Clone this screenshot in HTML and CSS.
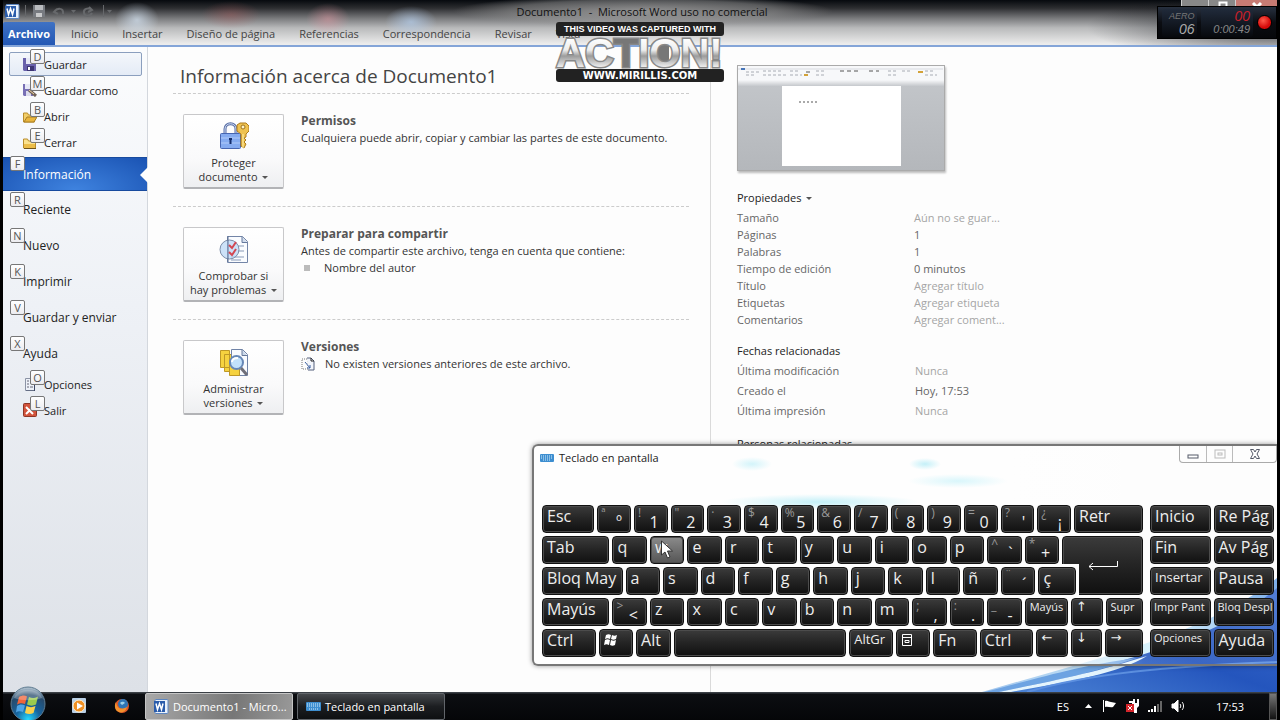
FILE: index.html
```html
<!DOCTYPE html>
<html lang="es">
<head>
    <meta charset="UTF-8">
    <meta name="viewport" content="width=device-width, initial-scale=1.0">
    <title>Documento1 - Microsoft Word uso no comercial</title>
    <link rel="stylesheet" href="styles.css">
</head>
<body>
    <div class="word">
        <header class="header">
            <div class="titlebar">
                <svg class="word-icon" width="15" height="15" viewBox="0 0 15 15"><rect x="1" y="0.5" width="13" height="14" rx="1" fill="#e9f1fb" stroke="#5d86c0"/><rect x="0" y="2" width="11" height="11" fill="#2a5cab"/><path d="M2 4.500l1.500 6 2-6 2 6 1.500-6" fill="none" stroke="#fff" stroke-width="1.500"/></svg>
                <svg width="90" height="14" viewBox="0 0 90 14" fill="none" stroke="#66686b"><path d="M2.500 1v12M80.500 1v12"/><rect x="10" y="1" width="12" height="12" fill="#777a80" stroke="none"/><rect x="12" y="1" width="8" height="5" fill="#b9bbbf" stroke="none"/><rect x="13" y="9" width="6" height="4" fill="#c8c9cb" stroke="none"/><path d="M34 5l-3 3 4 2M31 8c3-4 10-5 9 2M66 3l3 3-4 2M69 6c-4-3-9-1-8 3s6 4 8 0" stroke-width="2"/><path d="M48 6h5l-2.500 3zM84 6h5l-2.500 3z" fill="#66686b" stroke="none"/></svg>
                <span class="window-title">Documento1&nbsp; -&nbsp; Microsoft Word uso no comercial</span>
                <div class="caption">
                    <button aria-label="Minimizar"></button>
                    <button aria-label="Restaurar"><svg width="12" height="6"><path d="M3.500 6V2.500h7V6" fill="none" stroke="#fff" stroke-width="2"/></svg></button>
                    <button class="caption-close" aria-label="Cerrar"><svg width="12" height="6"><path d="M2 3l4 4 4-4" fill="none" stroke="#fff" stroke-width="3"/></svg></button>
                </div>
            </div>
            <nav class="tabs">
                <button class="tab active">Archivo</button>
                <button class="tab">Inicio</button>
                <button class="tab">Insertar</button>
                <button class="tab">Diseño de página</button>
                <button class="tab">Referencias</button>
                <button class="tab">Correspondencia</button>
                <button class="tab">Revisar</button>
                <button class="tab">Vista</button>
            </nav>
        </header>

        <div class="backstage">
            <nav class="sidebar">
                <button class="item small focused">
                    <svg width="14" height="14" viewBox="0 0 14 14"><path d="M0 1h13v13H1l-1-1z" fill="#6961ab"/><rect x="3" y="1" width="8" height="6" fill="#e6e8f6"/><rect x="4" y="9" width="7" height="5" fill="#3c3573"/><rect x="5" y="10" width="2" height="3" fill="#fff"/></svg>
                    <kbd>D</kbd><span>Guardar</span>
                </button>
                <button class="item small">
                    <svg width="14" height="14" viewBox="0 0 14 14"><path d="M0 1h10v12H1l-1-1z" fill="#7870b5"/><rect x="2" y="1" width="6" height="5" fill="#e6e8f6"/><rect x="3" y="8" width="5" height="5" fill="#dcdcec"/><path d="M6 7l7 6" stroke="#6f6257" stroke-width="3"/><path d="M6 7l5 4" stroke="#f0d3a3"/></svg>
                    <kbd>M</kbd><span>Guardar como</span>
                </button>
                <button class="item small">
                    <svg width="14" height="14" viewBox="0 0 14 14"><path d="M.5 13V4h4l1 2h6v7z" fill="#f3cf69" stroke="#b98d2c"/><path d="M1 13l3-5h10l-3 5z" fill="#e9b53d" stroke="#a97e25"/></svg>
                    <kbd>B</kbd><span>Abrir</span>
                </button>
                <button class="item small">
                    <svg width="14" height="14" viewBox="0 0 14 14"><path d="M.5 13V4h4l1 2h7v7z" fill="#fbe18c" stroke="#b98d2c"/><path d="M1 9h11v4H1z" fill="#ecbd49"/><path d="M1 13.500h12" stroke="#705419"/></svg>
                    <kbd>E</kbd><span>Cerrar</span>
                </button>
                <button class="item selected"><kbd>F</kbd><span>Información</span></button>
                <button class="item"><kbd>R</kbd><span>Reciente</span></button>
                <button class="item"><kbd>N</kbd><span>Nuevo</span></button>
                <button class="item"><kbd>K</kbd><span>Imprimir</span></button>
                <button class="item"><kbd>V</kbd><span>Guardar y enviar</span></button>
                <button class="item"><kbd>X</kbd><span>Ayuda</span></button>
                <button class="item small">
                    <svg width="14" height="14" viewBox="0 0 14 14"><path d="M2.500 1.500h9v12h-9z" fill="#edf1f8" stroke="#8b93a5"/><path d="M4 4h2M4 7h2M4 10h2M7 10h3" stroke="#667" stroke-width="1"/><path d="M11.500 4v10H3" fill="none" stroke="#3f4965"/></svg>
                    <kbd>O</kbd><span>Opciones</span>
                </button>
                <button class="item small">
                    <svg width="14" height="14" viewBox="0 0 14 14"><rect x=".5" y=".5" width="13" height="13" rx="1" fill="#d2543c" stroke="#8d3526"/><path d="M3 4l7 7M10 4l-7 7" stroke="#fff" stroke-width="2"/></svg>
                    <kbd>L</kbd><span>Salir</span>
                </button>
            </nav>

            <main class="info">
                <h1>Información acerca de Documento1</h1>
                <section class="block">
                    <button class="big-button">
                        <svg width="30" height="30" viewBox="0 0 30 30"><path d="M6 12V7c0-7 11-7 11 0v5" fill="none" stroke="#5a6fa5" stroke-width="3"/><path d="M6 12V7c0-7 11-7 11 0v5" fill="none" stroke="#cfdcf5"/><rect x="1.500" y="11.500" width="20" height="15" rx="1" fill="#85abf0" stroke="#4766b1"/><path d="M2 16h19M2 21h19" stroke="#b1cbf9"/><path d="M11.500 16v6M10 17h3" stroke="#132c6a" stroke-width="2"/><path d="M18 3l3-2h6l3 3v5l-3 3v3l-2 1 2 2-2 2 2 2-2 4-3-2V12l-4-3z" fill="#efc250" stroke="#ad7b1c"/><circle cx="24" cy="5" r="2" fill="#fff4c9" stroke="#9c721e"/><path d="M24 12v14" stroke="#fff0a7"/></svg>
                        <span>Proteger<br>documento <i class="caret"></i></span>
                    </button>
                    <div class="block-text">
                        <h2>Permisos</h2>
                        <p>Cualquiera puede abrir, copiar y cambiar las partes de este documento.</p>
                    </div>
                </section>
                <section class="block">
                    <button class="big-button">
                        <svg width="30" height="30" viewBox="0 0 30 30"><path d="M8.500 1.500h15l5 5v21h-20z" fill="#fafcff" stroke="#7385a7"/><path d="M23 1.500v6h5.500" fill="#d1dced" stroke="#667a9e"/><path d="M19 11h6M19 16h6M12 22h13M12 25h10" stroke="#8799b7"/><circle cx="10.500" cy="14.500" r="9.500" fill="#b8d6f5" fill-opacity=".7" stroke="#7d8ea9"/><path d="M9 1v26" stroke="#596b8f"/><path d="M10 10l3 3 4-6M10 17l3 3 4-6" fill="none" stroke="#d34752" stroke-width="2"/></svg>
                        <span>Comprobar si<br>hay problemas <i class="caret"></i></span>
                    </button>
                    <div class="block-text">
                        <h2>Preparar para compartir</h2>
                        <p>Antes de compartir este archivo, tenga en cuenta que contiene:</p>
                        <ul>
                            <li>Nombre del autor</li>
                        </ul>
                    </div>
                </section>
                <section class="block">
                    <button class="big-button">
                        <svg width="30" height="30" viewBox="0 0 30 30"><path d="M1.500 2.500h9v17h-9zM5.500 6.500h9v17h-9z" fill="#f6d23f" stroke="#be9827"/><path d="M12.500 1.500h11l5 5v21h-16z" fill="#f9fbff" stroke="#7083a7"/><path d="M23 1.500v6h5" fill="#cbd8ea" stroke="#66789a"/><path d="M10.500 11.500h10v16h-10z" fill="#f6d23f" stroke="#be9827"/><circle cx="17.500" cy="14.500" r="6.500" fill="#c2e1fb" stroke="#6687b7" stroke-width="2"/><path d="M13 14c0-4 4-4 6-4" fill="none" stroke="#fff" stroke-width="2"/><path d="M22 20l6 7" stroke="#6f6f79" stroke-width="3"/></svg>
                        <span>Administrar<br>versiones <i class="caret"></i></span>
                    </button>
                    <div class="block-text">
                        <h2>Versiones</h2>
                        <p class="with-icon">
                            <svg width="14" height="14" viewBox="0 0 14 14" fill="none"><path d="M1 2h6v10H1z" stroke="#777" stroke-dasharray="1 1"/><path d="M6 1h4l3 3v9H7" fill="#f2f5fb" stroke="#55607c"/><path d="M10 1v3h3" stroke="#222"/><path d="M4 5l5 6M9 8v3H6" stroke="#3b5f9f"/></svg>
                            No existen versiones anteriores de este archivo.
                        </p>
                    </div>
                </section>
            </main>

            <aside class="properties">
                <svg class="swoosh" width="300" height="118" viewBox="0 0 300 118" preserveAspectRatio="none">
                    <defs>
                        <linearGradient id="blue" x1="0" y1="1" x2="1" y2="0"><stop offset="0" stop-color="#4e86d6"/><stop offset=".5" stop-color="#2455bd"/><stop offset="1" stop-color="#3f6fd0"/></linearGradient>
                        <linearGradient id="cyan" x1="0" x2="1"><stop offset="0" stop-color="#9fc4ec"/><stop offset=".6" stop-color="#d8f3fc"/><stop offset="1" stop-color="#6fa5e6"/></linearGradient>
                    </defs>
                    <path d="M5 118C120 84 230 60 300 4v114z" fill="url(#cyan)"/>
                    <path d="M20 118C120 92 230 74 300 14v104z" fill="url(#blue)"/>
                    <path d="M8 118C70 102 100 92 160 84 120 98 80 106 22 118z" fill="#6da3e2"/>
                    <path d="M22 118C80 106 120 98 170 82 140 100 90 108 34 118z" fill="#e4f4fd"/>
                    <path d="M50 118c60-18 140-26 250-30" fill="none" stroke="#5c8fdf" stroke-width="2"/>
                </svg>
                <div class="thumb">
                    <div class="thumb-ribbon">
                        <svg width="205" height="14" viewBox="0 0 205 14" fill="none" stroke="#a8acb4"><path d="M0 3h205" stroke="#d7dae0"/><path d="M3 3h4" stroke="#4775b8" stroke-width="2"/><path d="M8 6h14M8 9h10M25 5h20M25 9h24M52 5h10M52 9h12M78 5h10M78 9h9M150 5h8M150 9h10M164 5h10M187 5h10M187 9h12" stroke-dasharray="3 2"/><path d="M68 6h4M102 5h20M131 5h10" stroke="#555" stroke-dasharray="4 3"/><path d="M66 9h4M180 6h5" stroke="#d3a238" stroke-width="2"/></svg>
                    </div>
                    <div class="thumb-page"></div>
                </div>
                <button class="props-title">Propiedades <i class="caret"></i></button>
                <table>
                    <tr><th>Tamaño</th><td class="empty">Aún no se guar...</td></tr>
                    <tr><th>Páginas</th><td>1</td></tr>
                    <tr><th>Palabras</th><td>1</td></tr>
                    <tr><th>Tiempo de edición</th><td>0 minutos</td></tr>
                    <tr><th>Título</th><td class="empty">Agregar título</td></tr>
                    <tr><th>Etiquetas</th><td class="empty">Agregar etiqueta</td></tr>
                    <tr><th>Comentarios</th><td class="empty">Agregar coment...</td></tr>
                </table>
                <h3>Fechas relacionadas</h3>
                <table class="dates">
                    <tr><th>Última modificación</th><td class="empty">Nunca</td></tr>
                    <tr><th>Creado el</th><td>Hoy, 17:53</td></tr>
                    <tr><th>Última impresión</th><td class="empty">Nunca</td></tr>
                </table>
                <h3>Personas relacionadas</h3>
            </aside>
        </div>
    </div>

    <div class="keyboard">
        <div class="kb-title">
            <svg width="14" height="8" viewBox="0 0 14 8"><rect width="14" height="8" rx="1" fill="#3d8ed0"/><path d="M1 2h12M1 4h12M3 6h8" stroke="#d8eefc" stroke-dasharray="1 1"/></svg>
            <span>Teclado en pantalla</span>
            <div class="kb-caption">
                <button aria-label="Minimizar"><svg width="12" height="12"><rect x="1" y="7" width="10" height="3" fill="#fff" stroke="#555a68"/></svg></button>
                <button aria-label="Maximizar"><svg width="12" height="12" fill="none" stroke="#bbb"><rect x="1" y="2" width="10" height="8"/><rect x="4" y="5" width="4" height="2"/></svg></button>
                <button class="wide" aria-label="Cerrar"><svg width="12" height="12"><path d="M1.500 1.500h3L6 4l1.500-2.500h3L8 6l2.500 4.500h-3L6 8l-1.500 2.500h-3L4 6z" fill="#fff" stroke="#555a68"/></svg></button>
            </div>
        </div>
        <div class="keys">
            <div class="keys-main">
                <div class="row">
                    <button class="key w53">Esc</button>
                    <button class="key dual"><sup>ª</sup><b>º</b></button>
                    <button class="key dual"><sup>!</sup><b>1</b></button>
                    <button class="key dual"><sup>"</sup><b>2</b></button>
                    <button class="key dual"><sup>·</sup><b>3</b></button>
                    <button class="key dual"><sup>$</sup><b>4</b></button>
                    <button class="key dual"><sup>%</sup><b>5</b></button>
                    <button class="key dual"><sup>&amp;</sup><b>6</b></button>
                    <button class="key dual"><sup>/</sup><b>7</b></button>
                    <button class="key dual"><sup>(</sup><b>8</b></button>
                    <button class="key dual"><sup>)</sup><b>9</b></button>
                    <button class="key dual"><sup>=</sup><b>0</b></button>
                    <button class="key dual"><sup>?</sup><b>'</b></button>
                    <button class="key dual"><sup>¿</sup><b>¡</b></button>
                    <button class="key w70">Retr</button>
                </div>
                <div class="enter-rows">
                    <div class="row row-upper">
                        <button class="key w67">Tab</button>
                        <button class="key">q</button>
                        <button class="key hover">w
                            <svg class="cursor" width="12" height="19" viewBox="0 0 12 19"><path d="M.5 1v14l3.500-3 2.500 6 2.500-1-2.500-6h5z" fill="#fff" stroke="#333"/></svg>
                        </button>
                        <button class="key">e</button>
                        <button class="key">r</button>
                        <button class="key">t</button>
                        <button class="key">y</button>
                        <button class="key">u</button>
                        <button class="key">i</button>
                        <button class="key">o</button>
                        <button class="key">p</button>
                        <button class="key dual"><sup>^</sup><b>`</b></button>
                        <button class="key dual"><sup>*</sup><b>+</b></button>
                    </div>
                    <button class="key enter" aria-label="Intro"><svg width="32" height="10" viewBox="0 0 32 10"><path d="M30.500 0v5.500H2M6 2L2 5.500 6 9" fill="none" stroke="#fff"/></svg></button>
                    <div class="row row-lower">
                        <button class="key w80">Bloq May</button>
                        <button class="key">a</button>
                        <button class="key">s</button>
                        <button class="key">d</button>
                        <button class="key">f</button>
                        <button class="key">g</button>
                        <button class="key">h</button>
                        <button class="key">j</button>
                        <button class="key">k</button>
                        <button class="key">l</button>
                        <button class="key">ñ</button>
                        <button class="key dual"><sup>¨</sup><b>´</b></button>
                        <button class="key w37">ç</button>
                    </div>
                </div>
                <div class="row">
                    <button class="key w67">Mayús</button>
                    <button class="key dual"><sup>&gt;</sup><b>&lt;</b></button>
                    <button class="key">z</button>
                    <button class="key">x</button>
                    <button class="key">c</button>
                    <button class="key">v</button>
                    <button class="key">b</button>
                    <button class="key">n</button>
                    <button class="key">m</button>
                    <button class="key dual"><sup>;</sup><b>,</b></button>
                    <button class="key dual"><sup>:</sup><b>.</b></button>
                    <button class="key dual"><sup>_</sup><b>-</b></button>
                    <button class="key w43 tiny">Mayús</button>
                    <button class="key w31 arrow">↑</button>
                    <button class="key w37 tiny">Supr</button>
                </div>
                <div class="row">
                    <button class="key w53">Ctrl</button>
                    <button class="key" aria-label="Windows"><svg width="14" height="14" viewBox="0 0 14 14" fill="#fff"><path d="M2 2c2-1 3-1 5 0L6 6C4 5 3 5 1 6zM8 2c2 1 3 1 5 0l-1 4c-2 1-3 1-5 0zM1 7c2-1 3-1 5 0l-1 5c-2-1-3-1-5 0zM7 7c2 1 3 1 5 0l-1 5c-2 1-3 1-5 0z"/></svg></button>
                    <button class="key">Alt</button>
                    <button class="key w172" aria-label="Espacio"></button>
                    <button class="key w43 mid">AltGr</button>
                    <button class="key" aria-label="Menú"><svg width="12" height="14" fill="none" stroke="#fff"><path d="M1.500 1.500h9v11h-9zM1 4.500h10M4 7.500h4v2H4z"/></svg></button>
                    <button class="key w43">Fn</button>
                    <button class="key w53">Ctrl</button>
                    <button class="key w31 arrow">←</button>
                    <button class="key w31 arrow">↓</button>
                    <button class="key w37 arrow">→</button>
                </div>
            </div>
            <div class="keys-nav">
                <button class="key">Inicio</button>
                <button class="key">Re Pág</button>
                <button class="key">Fin</button>
                <button class="key">Av Pág</button>
                <button class="key mid">Insertar</button>
                <button class="key">Pausa</button>
                <button class="key tiny">Impr Pant</button>
                <button class="key tiny">Bloq Despl</button>
                <button class="key tiny">Opciones</button>
                <button class="key">Ayuda</button>
            </div>
        </div>
    </div>

    <footer class="taskbar">
        <button class="start" aria-label="Inicio">
            <svg width="36" height="36" viewBox="0 0 36 36"><defs><radialGradient id="orb" cx=".5" cy=".95" r=".9"><stop offset="0" stop-color="#25d9ff"/><stop offset=".4" stop-color="#17649f"/><stop offset=".8" stop-color="#274a6b"/><stop offset="1" stop-color="#a6b9c8"/></radialGradient></defs><circle cx="18" cy="18" r="17" fill="url(#orb)" stroke="#5f7c91"/><path d="M9 11c3-2 6-2 8-.5L15 18c-3-1-5-1-8 .5z" fill="#f0653a"/><path d="M19 11c3 1.500 5 1.500 9-.5l-2 8c-3 1.500-6 1.500-9 0z" fill="#9ccb4d"/><path d="M7 20c3-2 5-2 8-.5L13 26c-3-1-5-1-7 .5z" fill="#4ea4e6"/><path d="M16.500 20c3 1.500 6 1.500 9 0l-2 7c-3 1.500-6 1-8.500 0z" fill="#fbd14c"/><path d="M4 12C8 1 28 1 32 12c-8 3-20 3-28 0z" fill="#fff" opacity=".25"/></svg>
        </button>
        <button class="launcher" aria-label="Reproductor"><svg width="16" height="16" viewBox="0 0 16 16"><rect x="1" y="0" width="14" height="15" rx="1" fill="#b8cfe6"/><circle cx="8" cy="8" r="6" fill="#f09125" stroke="#fff1d2"/><path d="M6 4.500v7l6-3.500z" fill="#fff"/></svg></button>
        <button class="launcher" aria-label="Firefox"><svg width="16" height="16" viewBox="0 0 16 16"><circle cx="8" cy="8" r="7" fill="#de5728"/><circle cx="9" cy="6" r="5" fill="#2f75b5"/><path d="M2 4c1 7 5 8 11 5-1 5-6 7-10 4-2-2-3-6-1-9z" fill="#f2912d"/><path d="M6 5c2-2 4-1 5 0l-3 2z" fill="#9fd3ea"/></svg></button>
        <button class="task current">
            <svg width="15" height="15" viewBox="0 0 15 15"><rect x="1" y=".5" width="13" height="14" rx="1" fill="#e9f1fb" stroke="#5d86c0"/><rect y="2" width="11" height="11" fill="#2a5cab"/><path d="M2 4.500l1.500 6 2-6 2 6 1.500-6" fill="none" stroke="#fff" stroke-width="1.500"/></svg>
            Documento1 - Micro...
        </button>
        <button class="task">
            <svg width="15" height="9" viewBox="0 0 15 9"><rect width="15" height="9" rx="1" fill="#3d8ed0"/><path d="M1 2h13M1 4h13M3 7h9" stroke="#d8eefc" stroke-dasharray="1 1"/></svg>
            Teclado en pantalla
        </button>
        <div class="tray">
            <span class="lang">ES</span>
            <svg width="9" height="5"><path d="M1 4l3.500-4L8 4z" fill="#fff"/></svg>
            <svg width="15" height="14" viewBox="0 0 15 14"><path d="M1.500 1v12" stroke="#fff"/><path d="M3 2c3-1 4 1 6 1l5 1-3 4c-3 1-5-1-8 0z" fill="#fff"/></svg>
            <svg width="13" height="14" viewBox="0 0 13 14"><path d="M3 3h4M8 0v4M12 0v4" stroke="#fff" stroke-width="2"/><path d="M6 4h7v3l-2 2v5H8V9L6 7z" fill="#fff"/><rect y="5" width="8" height="8" fill="#d4252b"/><path d="M2 7l4 4M6 7l-4 4" stroke="#fff"/></svg>
            <svg width="14" height="12" viewBox="0 0 14 12"><path d="M1 12v-2M4 12V9M7 12V6" stroke="#fff" stroke-width="2"/><path d="M10 12V4M13 12V1" stroke="#666" stroke-width="2"/></svg>
            <svg width="14" height="14" viewBox="0 0 14 14" fill="none" stroke="#fff"><path d="M1 5h2l4-4v12L3 9H1z" fill="#fff"/><path d="M9 5c1 1 1 3 0 4M11 3c2 2 2 6 0 8"/></svg>
            <time>17:53</time>
        </div>
        <button class="show-desktop" aria-label="Mostrar escritorio"></button>
    </footer>

    <div class="watermark">
        <p class="wm-top">THIS VIDEO WAS CAPTURED WITH</p>
        <svg width="172" height="33" viewBox="0 0 172 33">
            <defs><linearGradient id="steel" gradientUnits="userSpaceOnUse" x1="0" y1="2" x2="0" y2="32"><stop offset="0" stop-color="#fff"/><stop offset=".4" stop-color="#eee"/><stop offset=".6" stop-color="#9c9c9c"/><stop offset="1" stop-color="#f6f6f6"/></linearGradient></defs>
            <rect x="97" y="7" width="18" height="19" rx="3" fill="#777"/>
            <text class="wm-logo" x="2" y="31">AC<tspan class="wm-dark">T</tspan>ION!</text>
        </svg>
        <p class="wm-bottom">WWW.MIRILLIS.COM</p>
    </div>

    <div class="recorder">
        <div class="rec-panel"><span class="dim">AERO</span><span class="num">06</span></div>
        <div class="rec-panel"><span class="num red">00</span><span class="dim clock">0:00:49</span></div>
        <div class="rec-dot"></div>
    </div>
</body>
</html>
```
FILE: styles.css
```css
* {
    box-sizing: border-box;
}
body {
    margin: 0;
    padding: 0 3px;
    height: 100vh;
    display: flex;
    flex-direction: column;
    position: relative;
    overflow: hidden;
    background: #000;
    font-family: "Open Sans", "Noto Sans", sans-serif;
    font-size: 11px;
    color: #333;
}
button {
    font: inherit;
    color: inherit;
    background: none;
    border: none;
    margin: 0;
    padding: 0;
    text-align: left;
}
h1, h2, h3, p, ul {
    margin: 0;
    padding: 0;
    font-weight: normal;
}
svg {
    flex: none;
}

/* Word window */
.word {
    flex: 1;
    min-height: 0;
    display: flex;
    flex-direction: column;
    background: #fdfdfd;
}
.header {
    border-bottom: 2px solid #84a5d8;
    background:
        radial-gradient(ellipse 22px 18px at 134px 20px, rgba(215, 230, 245, 0.7), transparent),
        radial-gradient(ellipse 30px 14px at 228px 15px, rgba(170, 90, 90, 0.4), transparent),
        radial-gradient(ellipse 22px 16px at 325px 19px, rgba(225, 150, 160, 0.5), transparent),
        radial-gradient(ellipse 26px 16px at 408px 22px, rgba(180, 205, 235, 0.7), transparent),
        radial-gradient(ellipse 190px 16px at 640px 11px, rgba(160, 160, 160, 0.85), rgba(150, 150, 150, 0.5) 70%, transparent),
        radial-gradient(ellipse 190px 34px at 100% 60%, rgba(10, 12, 18, 0.7), transparent),
        linear-gradient(#06090e 0, #2c2d30 8px, #77787a 18px, #b9babb 28px, #ececec 44px);
}
.titlebar {
    height: 22px;
    display: flex;
    align-items: center;
    gap: 3px;
    padding-left: 2px;
}
.window-title {
    flex: 1;
    padding-right: 10px;
    text-align: center;
    color: #111;
}
.caption {
    align-self: flex-start;
    display: flex;
    height: 7px;
    background: #888;
}
.caption button {
    width: 27px;
    height: 7px;
    display: flex;
    justify-content: center;
    border-left: 1px solid #ccc;
}
.caption .caption-close {
    width: 42px;
    background: #c77b74;
}
.tabs {
    height: 23px;
    display: flex;
    gap: 24px;
}
.tab {
    color: #444;
}
.tab.active {
    width: 52px;
    margin-right: -8px;
    text-align: center;
    color: #fff;
    font-weight: bold;
    background: linear-gradient(#3f72c4, #2257b4);
    border-radius: 2px 2px 0 0;
}
.backstage {
    flex: 1;
    min-height: 0;
    display: flex;
}

/* Left menu */
.sidebar {
    width: 145px;
    padding-top: 4px;
    display: flex;
    flex-direction: column;
    background: linear-gradient(#fbfcfd, #eef1f6 40%, #dde1e7);
    border-right: 1px solid #d3d7dd;
}
.item {
    position: relative;
    height: 36px;
    flex: none;
    display: flex;
    align-items: center;
    padding-left: 20px;
    font-size: 12px;
    color: #222;
}
.item.small {
    height: 26px;
    font-size: 11px;
    gap: 7px;
}
.item.focused {
    height: 24px;
    margin: 1px 5px 1px 6px;
    padding-left: 13px;
    border: 1px solid #8b9fbe;
    border-radius: 2px;
    background: linear-gradient(#f4f7fb, #e4ebf6);
}
.item.selected {
    height: 34px;
    margin: 2px 0 0;
    color: #fff;
    background: radial-gradient(ellipse at 50% 100%, #3f83df, #1a53b3);
    border-top: 1px solid #174a9e;
    border-bottom: 1px solid #174a9e;
}
.item.selected::after {
    content: "";
    position: absolute;
    right: -1px;
    top: 9px;
    border: 8px solid transparent;
    border-left: 0;
    border-right-color: #fdfdfd;
}
kbd {
    position: absolute;
    left: 7px;
    top: 1px;
    width: 15px;
    height: 15px;
    border: 1px solid #777;
    border-radius: 2px;
    background: linear-gradient(#fff, #ececf0);
    font-family: inherit;
    font-size: 11px;
    line-height: 13px;
    text-align: center;
    color: #555;
}
.item.selected kbd {
    top: -2px;
}
.small kbd {
    left: 27px;
    top: -1px;
}
.focused kbd {
    left: 20px;
    top: -4px;
}

/* Middle column */
.info {
    width: 563px;
    padding: 15px 21px 0 25px;
    border-right: 1px solid #dadada;
}
h1 {
    padding: 0 7px 2px;
    font-size: 19px;
    line-height: 29px;
    color: #444;
}
.block {
    display: flex;
    gap: 17px;
    padding: 20px 10px 17px;
    border-top: 1px dashed #ccc;
}
.big-button {
    width: 101px;
    height: 75px;
    flex: none;
    display: flex;
    flex-direction: column;
    align-items: center;
    justify-content: flex-end;
    gap: 4px;
    padding-bottom: 3px;
    border: 1px solid #c8c8ca;
    border-bottom: 2px solid #b2b3b6;
    border-radius: 2px;
    background: linear-gradient(#fff, #fafafb 60%, #eeeff1);
    line-height: 14px;
    text-align: center;
}
.caret {
    display: inline-block;
    margin-left: 2px;
    vertical-align: 2px;
    border: 3px solid transparent;
    border-top-color: #555;
    border-bottom: 0;
}
.block-text {
    line-height: 17px;
}
h2 {
    margin-bottom: 2px;
    font-size: 12px;
    font-weight: bold;
    line-height: 13px;
    color: #555;
}
ul {
    list-style: none;
}
li {
    display: flex;
    align-items: center;
    gap: 14px;
    padding-left: 3px;
}
li::before {
    content: "";
    width: 6px;
    height: 6px;
    background: #bbb;
}
.with-icon {
    display: flex;
    align-items: center;
    gap: 10px;
}

/* Properties column */
.properties {
    position: relative;
    flex: 1;
    padding: 18px 0 0 26px;
}
.swoosh {
    position: absolute;
    right: 0;
    bottom: 0;
}
.thumb {
    width: 208px;
    height: 106px;
    display: flex;
    flex-direction: column;
    border: 1px solid #aaa;
    background: linear-gradient(#c5c8cc, #b4b7bb);
    box-shadow: 1px 2px 2px #bbb;
}
.thumb-ribbon {
    height: 20px;
    background: linear-gradient(#f7f8fa 14px, #c5c8cc);
}
.thumb-page {
    width: 119px;
    flex: 1;
    margin: 0 0 4px 44px;
    padding: 15px 17px;
    background: #fff;
}
.thumb-page::before {
    content: "";
    display: block;
    width: 18px;
    border-top: 2px dotted #aaa;
}
.props-title {
    display: block;
    margin: 18px 0 3px;
    line-height: 17px;
    color: #222;
}
table {
    border-collapse: collapse;
    line-height: 17px;
}
th, td {
    padding: 0;
    font-weight: normal;
    text-align: left;
    color: #666;
}
th {
    width: 177px;
}
td.empty {
    color: #a5a5a5;
}
h3 {
    margin: 14px 0 2px;
    font-size: 11px;
    line-height: 17px;
    color: #222;
}
.dates {
    line-height: 20px;
}
.dates td {
    padding-left: 1px;
}

/* On-screen keyboard */
.keyboard {
    position: absolute;
    left: 532px;
    right: 3px;
    bottom: 54px;
    height: 222px;
    display: flex;
    flex-direction: column;
    justify-content: space-between;
    padding-bottom: 7px;
    border: 2px solid #777;
    border-right: 0;
    border-radius: 6px 0 0 6px;
    background:
        radial-gradient(ellipse 20px 7px at 218px 18px, #d3f4fa, transparent),
        radial-gradient(ellipse 16px 6px at 391px 18px, #c4f0f8, transparent),
        radial-gradient(ellipse 50px 7px at 424px 35px, #d9f6fb, transparent),
        radial-gradient(ellipse 100px 8px at 286px 56px, #c4f0f8, transparent),
        linear-gradient(to right, #fefefe 64%, rgba(255, 255, 255, 0.1) 82%);
    box-shadow: 0 0 5px rgba(0, 0, 0, 0.4);
}
.kb-title {
    height: 23px;
    display: flex;
    align-items: center;
    gap: 5px;
    padding-left: 6px;
    color: #222;
}
.kb-caption {
    align-self: flex-start;
    display: flex;
    margin-left: auto;
    height: 17px;
    border: 1px solid #aaa;
    border-top: 0;
    border-radius: 0 0 4px 4px;
}
.kb-caption button {
    width: 26px;
    display: flex;
    align-items: center;
    justify-content: center;
    border-left: 1px solid #bbb;
}
.kb-caption button:first-child {
    border-left: 0;
}
.kb-caption .wide {
    width: 44px;
}
.keys {
    display: grid;
    grid-template-columns: 601fr 124fr;
    gap: 7px;
    padding: 0 3px 0 8px;
}
.keys-main {
    display: flex;
    flex-direction: column;
    gap: 3px;
    min-width: 0;
}
.row {
    display: flex;
    gap: 3px;
    min-width: 0;
}
.enter-rows {
    display: grid;
    grid-template-columns: 517fr 14fr 64fr;
    gap: 3px;
}
.row-upper {
    grid-area: 1 / 1;
}
.row-lower {
    grid-area: 2 / 1 / 3 / 3;
}
.keys-nav {
    display: grid;
    grid-template-columns: 1fr 1fr;
    grid-auto-rows: 28px;
    gap: 3px;
}
.key {
    position: relative;
    flex: 1 1 34px;
    min-width: 0;
    height: 28px;
    display: flex;
    align-items: flex-start;
    padding: 0 0 0 4px;
    border: 1px solid #111;
    border-radius: 4px;
    background: linear-gradient(#3b3b3b, #262626 45%, #101010);
    box-shadow: inset 0 0 0 1px #4c4c4c;
    font-size: 16px;
    line-height: 20px;
    color: #eee;
    white-space: nowrap;
}
.key svg {
    margin-top: 3px;
}
.key.hover {
    background: linear-gradient(#8b8b8b, #555);
}
.key .cursor {
    position: absolute;
    left: 10px;
    top: 0;
}
.key.enter {
    grid-area: 1 / 2 / 3 / 4;
    height: auto;
    padding: 21px 0 0 24px;
    clip-path: polygon(0 0, 100% 0, 100% 100%, 17px 100%, 17px 28px, 0 28px);
}
.mid {
    font-size: 13px;
    line-height: 18px;
}
.tiny {
    font-size: 11px;
    line-height: 16px;
}
.keys-nav .tiny {
    padding-left: 3px;
}
.arrow {
    font-family: "DejaVu Sans", sans-serif;
    font-size: 13px;
    line-height: 16px;
}
.w31 { flex-basis: 31px; }
.w37 { flex-basis: 37px; }
.w43 { flex-basis: 43px; }
.w53 { flex-basis: 53px; }
.w67 { flex-basis: 67px; }
.w70 { flex-basis: 70px; }
.w80 { flex-basis: 80px; }
.w172 { flex-basis: 172px; }
.dual {
    justify-content: space-between;
    padding: 0 8px 0 3px;
}
.dual sup {
    font-size: 12px;
    line-height: 14px;
    color: #999;
}
.dual b {
    padding-top: 6px;
    font-weight: normal;
}

/* Taskbar */
.taskbar {
    height: 28px;
    display: flex;
    align-items: center;
    background: linear-gradient(#3a3f45 1px, #0c0e12 2px, #050608);
    color: #fff;
}
.start {
    align-self: flex-start;
    width: 36px;
    height: 36px;
    margin: -6px 25px 0 7px;
}
.launcher {
    width: 43px;
    height: 16px;
}
.launcher + .launcher {
    width: 28px;
    margin-right: 3px;
}
.task {
    width: 148px;
    height: 27px;
    display: flex;
    align-items: center;
    gap: 4px;
    margin-right: 4px;
    padding-left: 8px;
    border: 1px solid #62666b;
    border-radius: 2px;
    background: linear-gradient(#45484c, #1c1e21 50%, #0e1012);
    color: #fff;
    white-space: nowrap;
}
.task.current {
    border-color: #c5c5c5;
    background: linear-gradient(100deg, #a9a9a9, #777 60%, #999);
}
.tray {
    display: flex;
    align-items: center;
    gap: 9px;
    margin-left: auto;
    margin-right: 25px;
}
.lang {
    margin-right: 6px;
}
.tray time {
    margin-left: 22px;
}
.show-desktop {
    width: 8px;
    height: 27px;
    border: 1px solid #555;
    background: linear-gradient(#777, #111);
}

/* Recording overlays */
.watermark {
    position: absolute;
    left: 554px;
    top: 22px;
    width: 172px;
    display: flex;
    flex-direction: column;
    align-items: center;
    color: #fff;
}
.watermark p {
    width: 168px;
    border-radius: 3px;
    background: #222;
    font-weight: bold;
    text-align: center;
    white-space: nowrap;
}
.watermark svg {
    overflow: visible;
}
.wm-top {
    height: 14px;
    font-family: "Liberation Sans", sans-serif;
    font-size: 9px;
    line-height: 14px;
}
.wm-bottom {
    height: 13px;
    font-family: "DejaVu Sans", sans-serif;
    font-size: 10px;
    line-height: 13px;
}
.wm-logo {
    font-family: "Liberation Sans", sans-serif;
    font-size: 40px;
    font-weight: bold;
    fill: url(#steel);
    stroke: #888;
    stroke-width: 3px;
    paint-order: stroke;
}
.wm-dark {
    fill: #777;
}
.recorder {
    position: absolute;
    right: 3px;
    top: 6px;
    width: 120px;
    height: 33px;
    display: flex;
    align-items: center;
    gap: 4px;
    padding: 0 4px;
    border: 1px solid #000;
    background: linear-gradient(#27303f, #0b0d12 50%, #06070a);
    font-family: "Liberation Sans", sans-serif;
    font-style: italic;
    line-height: 13px;
}
.rec-panel {
    flex: 33;
    display: flex;
    flex-direction: column;
    align-items: flex-end;
    padding: 1px 3px;
    border-radius: 3px;
    background: linear-gradient(#202a3a, #07090d);
}
.rec-panel + .rec-panel {
    flex: 51;
}
.dim {
    font-size: 9px;
    color: #777;
}
.clock {
    font-size: 11px;
    color: #888;
}
.num {
    font-size: 14px;
    color: #aaa;
}
.red {
    color: #c8202a;
}
.rec-dot {
    width: 15px;
    height: 15px;
    border: 1px solid #000;
    border-radius: 50%;
    background: radial-gradient(circle at 40% 35%, #ff5a4a, #d60a0a 60%);
}
```
